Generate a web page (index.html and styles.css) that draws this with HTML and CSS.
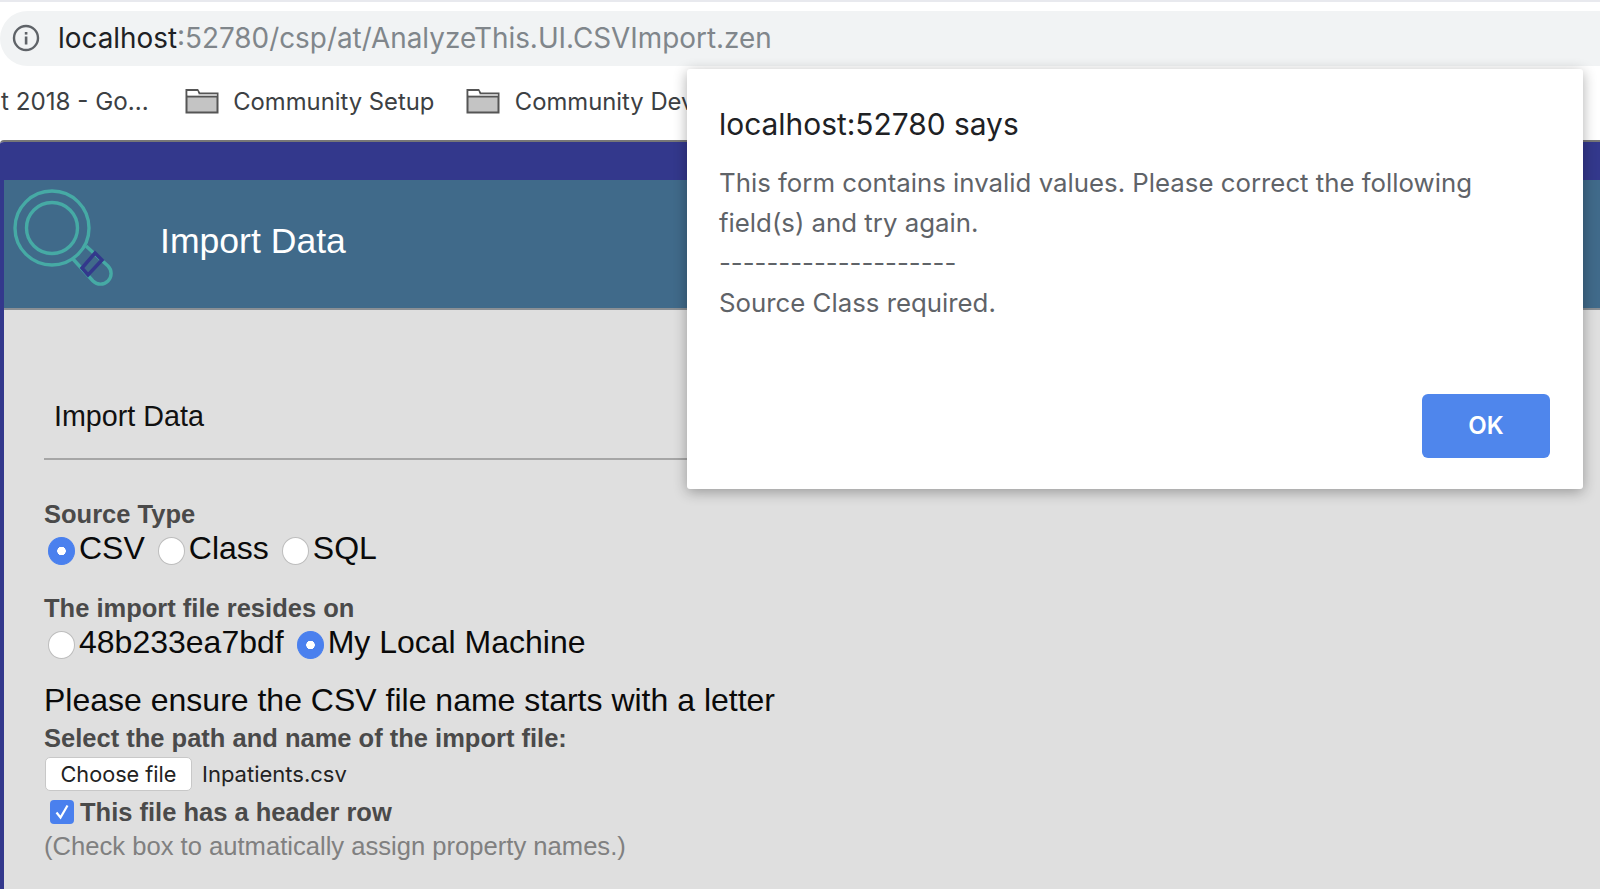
FILE: index.html
```html
<!DOCTYPE html>
<html lang="en">
<head>
<meta charset="utf-8">
<title>Import Data</title>
<link rel="stylesheet" href="styles.css">
</head>
<body>
<div class="topline"></div>
<div class="urlbar">
  <svg class="info" viewBox="0 0 28 28"><circle cx="14" cy="14" r="12" fill="none" stroke="#5f6368" stroke-width="2.4"/><rect x="12.8" y="12.5" width="2.6" height="8" fill="#5f6368"/><rect x="12.8" y="8" width="2.6" height="2.6" fill="#5f6368"/></svg>
  <span class="host">localhost</span><span class="path">:52780/csp/at/AnalyzeThis.UI.CSVImport.zen</span>
</div>
<div class="bookmarks">
  <span class="bm-first">t 2018 - Go...</span>
  <svg class="folder" viewBox="0 0 34 26"><path d="M1.5 24.5V2h11l2 3.500h18v19z" fill="#c4c4c4" stroke="#555" stroke-width="2"/><path d="M1.5 8.5h31" stroke="#555" stroke-width="2"/><path d="M2.500 3h10l1.500 4.500H2.500zM14 6.500h18v1H14z" fill="#fff"/></svg>
  <span class="bm">Community Setup</span>
  <svg class="folder" viewBox="0 0 34 26"><path d="M1.5 24.5V2h11l2 3.500h18v19z" fill="#c4c4c4" stroke="#555" stroke-width="2"/><path d="M1.5 8.5h31" stroke="#555" stroke-width="2"/><path d="M2.500 3h10l1.500 4.500H2.500zM14 6.500h18v1H14z" fill="#fff"/></svg>
  <span class="bm">Community Dev</span>
</div>
<div class="app">
  <div class="band"></div>
  <div class="main">
    <header class="hero">
      <svg class="logo" viewBox="10 184 104 104">
        <g fill="none" stroke="#46aaa5" stroke-width="3.400">
          <circle cx="52" cy="228" r="37"/>
          <circle cx="52" cy="228" r="25.500"/>
          <path d="M86 246L108 266A10.500 10.500 0 0 1 93 281L73 259"/>
        </g>
        <path d="M95 253L102 260L88 275L82 268Z" fill="none" stroke="#33388c" stroke-width="3.500"/>
      </svg>
      <h1 class="hero-title">Import Data</h1>
    </header>
    <section class="form">
      <h2 class="form-title">Import Data</h2>
      <div class="group">
        <div class="label">Source Type</div>
        <div class="radios">
          <span class="radio on"></span><span class="opt">CSV</span>
          <span class="radio"></span><span class="opt">Class</span>
          <span class="radio"></span><span class="opt">SQL</span>
        </div>
      </div>
      <div class="group group-2">
        <div class="label">The import file resides on</div>
        <div class="radios">
          <span class="radio"></span><span class="opt">48b233ea7bdf</span>
          <span class="radio on"></span><span class="opt">My Local Machine</span>
        </div>
      </div>
      <p class="notice">Please ensure the CSV file name starts with a letter</p>
      <div class="label">Select the path and name of the import file:</div>
      <div class="file-row"><span class="choose">Choose file</span><span class="fname">Inpatients.csv</span></div>
      <div class="check-row">
        <svg class="check" viewBox="0 0 24 24"><rect width="24" height="24" rx="4" fill="#4a80ee"/><path d="M6.500 12.500l4 5l7 -12" fill="none" stroke="#fff" stroke-width="2.200"/></svg>
        <span class="label">This file has a header row</span>
      </div>
      <div class="hint">(Check box to autmatically assign property names.)</div>
    </section>
  </div>
</div>
<div class="dialog">
  <div class="dlg-title">localhost:52780 says</div>
  <div class="dlg-body">This form contains invalid values. Please correct the following<br>field(s) and try again.<br>--------------------<br>Source Class required.</div>
  <div class="dlg-actions"><span class="ok">OK</span></div>
</div>
</body>
</html>
```
FILE: styles.css
```css
html, body { margin: 0; padding: 0; }
body { width: 1600px; height: 889px; overflow: hidden; background: #fff; font-family: "Liberation Sans", Arial, sans-serif; position: relative; }
.topline { height: 2px; background: #e8e9ee; }
.urlbar { margin-top: 9px; height: 54px; padding: 0 0 1px 12px; background: #f1f3f4; border-radius: 28px 0 0 28px; display: flex; align-items: center; font-family: Inter, sans-serif; font-size: 27.860px; white-space: nowrap; }
.info { width: 28px; height: 28px; margin-right: 18px; flex: none; }
.host { color: #202124; }
.path { color: #80868b; }
.bookmarks { height: 70px; padding-bottom: 4px; display: flex; align-items: center; font-family: Inter, sans-serif; font-size: 23.800px; color: #3c4043; white-space: nowrap; }
.bm-first { margin: 0 36px 0 1px; font-size: 24.200px; }
.folder { width: 34px; height: 26px; margin-right: 14.500px; flex: none; }
.bm { margin-right: 32px; }
.app { border-top: 2px solid #777; border-top-left-radius: 4px; overflow: hidden; }
.band { height: 38px; background: #33388c; }
.main { border-left: 4px solid #33388c; background: #dfdfdf; height: 709px; }
.hero { height: 128px; background: #406a8a; border-bottom: 2px solid #8a8f94; display: flex; align-items: flex-start; padding-left: 6px; }
.logo { width: 104px; height: 104px; flex: none; margin: 4px 46px 0 0; }
.hero-title { margin: 0 0 5px; align-self: center; font-size: 35.600px; font-weight: 400; color: #fff; }
.form { padding: 0 100px 0 40px; }
.form-title { margin: 0; padding: 90px 0 25px 10px; font-size: 28.700px; line-height: 33px; font-weight: 400; color: #111; border-bottom: 2px solid #a6a6a6; }
.group { margin-top: 39px; }
.group-2 { margin-top: 27px; }
.label { font-size: 25.500px; line-height: 30px; font-weight: 700; color: #4a4a4a; }
.radios { display: flex; align-items: center; height: 36px; margin-top: 1px; }
.radio { width: 27px; height: 28px; border-radius: 50%; background: #fff; border: 1px solid #bdbdbd; box-sizing: border-box; margin: 5px 4px 0 4px; flex: none; }
.radio.on { background: #4a80ee radial-gradient(circle, #fff 0 4px, transparent 4.500px); border-color: #4a80ee; }
.opt { font-size: 32px; color: #0a0a0a; margin-right: 9px; }
.notice { margin: 21px 0 4px; font-size: 32px; line-height: 38px; color: #0a0a0a; }
.file-row { display: flex; align-items: center; margin-top: 3px; height: 36px; }
.choose { width: 147px; height: 34px; box-sizing: border-box; margin-left: 1px; background: #fff; border: 1px solid #c8c8c8; border-radius: 5px; font-family: Inter, sans-serif; font-size: 21.700px; line-height: 33px; text-align: center; color: #222; }
.fname { margin-left: 10px; font-family: Inter, sans-serif; font-size: 22px; color: #222; }
.check-row { display: flex; align-items: center; height: 36px; margin-top: 2px; }
.check { width: 24px; height: 24px; margin: 0 6px 0 6px; flex: none; }
.hint { font-size: 25.600px; line-height: 32px; color: #808080; }
.dialog { position: absolute; left: 687px; top: 69px; width: 896px; height: 420px; box-sizing: border-box; background: #fff; border-radius: 3px; box-shadow: 0 3px 14px rgba(0,0,0,.32); padding: 35px 33px 31px 32px; display: flex; flex-direction: column; font-family: Inter, sans-serif; }
.dlg-title { font-size: 29.900px; line-height: 40px; color: #202124; }
.dlg-body { margin-top: 19px; font-size: 25.800px; line-height: 40px; color: #5f6368; flex: 1; }
.dlg-actions { display: flex; justify-content: flex-end; }
.ok { width: 128px; height: 64px; background: #4f86ec; border-radius: 6px; color: #fff; font-size: 24px; font-weight: 600; line-height: 64px; text-align: center; }
```
